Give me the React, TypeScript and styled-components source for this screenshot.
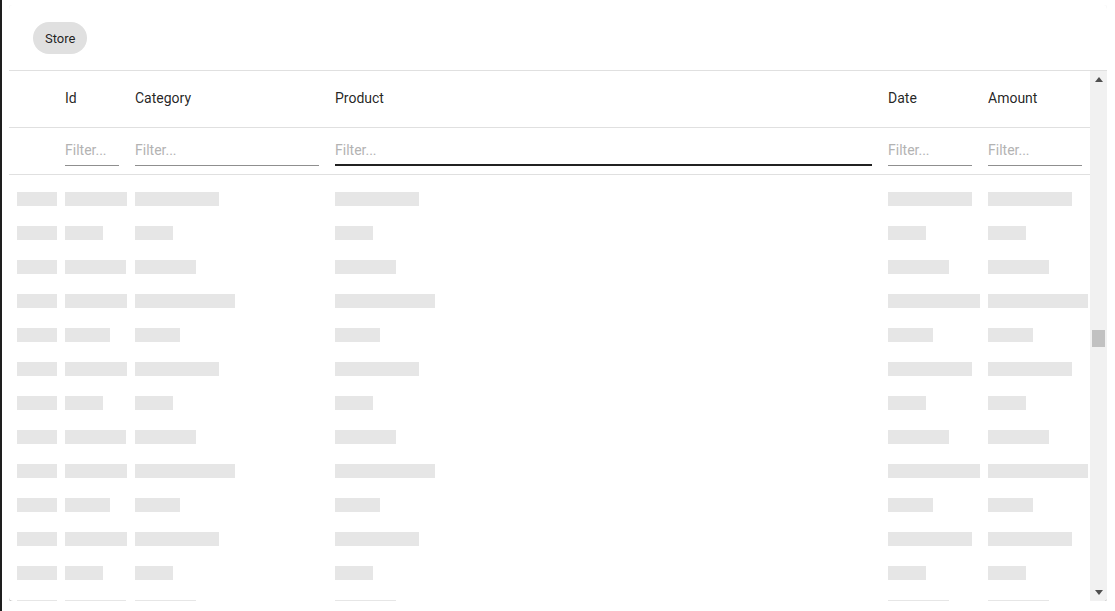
import React from "react";
import styled, { createGlobalStyle } from "styled-components";

const Global = createGlobalStyle`
  html { border-left: 2px solid #1e1e1e; background: #fff; }
  body {
    margin: 5px 8px 10px 7px;
    font-family: Roboto, "Liberation Sans", Arial, sans-serif;
    color: rgba(0,0,0,0.87);
  }
  * { box-sizing: border-box; }
`;

const Paper = styled.div`
  height: 596px;
  background: #fff;
  border-radius: 4px;
  box-shadow: 0 2px 1px -1px rgba(0,0,0,0.2), 0 1px 1px 0 rgba(0,0,0,0.14), 0 1px 3px 0 rgba(0,0,0,0.12);
  display: flex;
  flex-direction: column;
  overflow: hidden;
`;

const Toolbar = styled.div`
  height: 66px;
  flex: none;
  padding: 1px 24px 0;
  display: flex;
  align-items: center;
  border-bottom: 1px solid #e0e0e0;
`;

const Chip = styled.div`
  height: 32px;
  padding: 0 12px;
  border-radius: 16px;
  background: #e0e0e0;
  display: inline-flex;
  align-items: center;
  font-size: 13px;
  color: rgba(0,0,0,0.87);
`;

const Area = styled.div`
  flex: 1;
  min-height: 0;
  display: flex;
`;

const Table = styled.div`
  flex: 1;
  min-width: 0;
  overflow: hidden;
  display: flex;
  flex-direction: column;
`;

const cols = "48px 70px 200px 1fr 100px 110px";

const HeaderRow = styled.div`
  display: grid;
  grid-template-columns: ${cols};
  height: 57px;
  padding-bottom: 2px;
  flex: none;
  align-items: center;
  border-bottom: 1px solid #e0e0e0;
`;

const HeadCell = styled.div`
  padding: 0 8px;
  font-size: 14px;
  color: rgba(0,0,0,0.87);
  white-space: nowrap;
`;

const FilterRow = styled.div`
  display: grid;
  grid-template-columns: ${cols};
  height: 47px;
  flex: none;
  align-items: start;
  border-bottom: 1px solid #e0e0e0;
`;

const FilterCell = styled.div`
  padding: 8px 8px 0;
`;

const FilterInput = styled.div<{ $focused?: boolean }>`
  height: 30px;
  padding-top: 6px;
  font-size: 14px;
  color: #b3b3b3;
  border-bottom: ${(p) => (p.$focused ? "2px solid #212121" : "1px solid #8f8f8f")};
`;

const Body = styled.div`
  padding-top: 7px;
  display: flex;
  flex-direction: column;
`;

const Row = styled.div`
  display: grid;
  grid-template-columns: ${cols};
  height: 34px;
  flex: none;
  align-items: center;
`;

const BarCell = styled.div`
  padding-left: 8px;
  overflow: hidden;
`;

const Bar = styled.div<{ $w: number }>`
  width: ${(p) => p.$w}px;
  height: 14px;
  background: #e6e6e6;
`;

const Scrollbar = styled.div`
  width: 17px;
  flex: none;
  background: #f1f1f1;
  display: flex;
  flex-direction: column;
  align-items: center;
`;

const Arrow = styled.div`
  height: 17px;
  width: 17px;
  flex: none;
  display: flex;
  align-items: center;
  justify-content: center;
`;

const Thumb = styled.div`
  margin-top: 242px;
  width: 13px;
  height: 17px;
  background: #c1c1c1;
`;

const Spacer = styled.div`
  flex: 1;
`;

const widths = [84, 38, 61, 100, 45];

export default function App() {
  const rows = Array.from({ length: 13 }, (_, i) => widths[i % 5]);
  return (
    <>
      <Global />
      <Paper>
        <Toolbar>
          <Chip>Store</Chip>
        </Toolbar>
        <Area>
          <Table>
            <HeaderRow>
              <HeadCell />
              <HeadCell>Id</HeadCell>
              <HeadCell>Category</HeadCell>
              <HeadCell>Product</HeadCell>
              <HeadCell>Date</HeadCell>
              <HeadCell>Amount</HeadCell>
            </HeaderRow>
            <FilterRow>
              <FilterCell />
              <FilterCell><FilterInput>Filter...</FilterInput></FilterCell>
              <FilterCell><FilterInput>Filter...</FilterInput></FilterCell>
              <FilterCell><FilterInput $focused>Filter...</FilterInput></FilterCell>
              <FilterCell><FilterInput>Filter...</FilterInput></FilterCell>
              <FilterCell><FilterInput>Filter...</FilterInput></FilterCell>
            </FilterRow>
            <Body>
              {rows.map((w, i) => (
                <Row key={i}>
                  <BarCell><Bar $w={40} /></BarCell>
                  <BarCell><Bar $w={w} /></BarCell>
                  <BarCell><Bar $w={w} /></BarCell>
                  <BarCell><Bar $w={w} /></BarCell>
                  <BarCell><Bar $w={w} /></BarCell>
                  <BarCell><Bar $w={w} /></BarCell>
                </Row>
              ))}
            </Body>
          </Table>
          <Scrollbar>
            <Arrow>
              <svg width="8" height="5" viewBox="0 0 8 5"><polygon points="0,5 8,5 4,0" fill="#505050" /></svg>
            </Arrow>
            <Thumb />
            <Spacer />
            <Arrow>
              <svg width="8" height="5" viewBox="0 0 8 5"><polygon points="0,0 8,0 4,5" fill="#505050" /></svg>
            </Arrow>
          </Scrollbar>
        </Area>
      </Paper>
    </>
  );
}
